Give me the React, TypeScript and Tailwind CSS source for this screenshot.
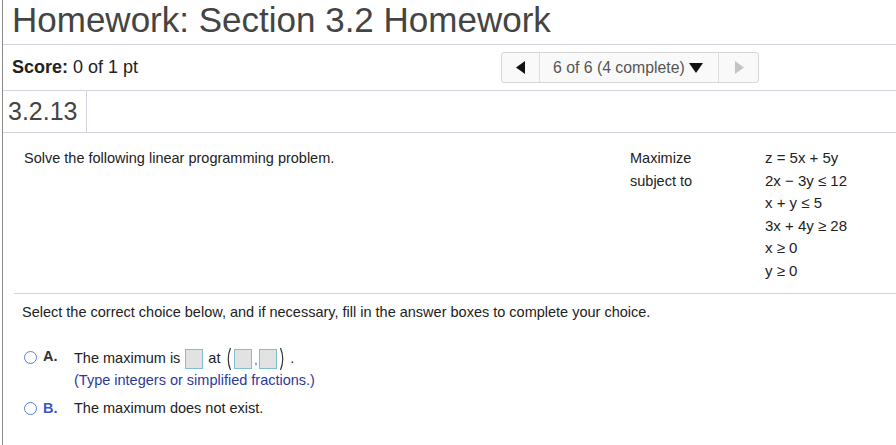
import React from 'react';

const AnswerBox = () => (
  <span className="inline-block w-[18px] h-[20px] bg-[#e2e2e2] border border-[#7fbfd0] align-middle" />
);

const Radio = () => (
  <span className="inline-block w-[13px] h-[13px] rounded-full border-[1.5px] border-[#5b7fe0] bg-white" />
);

const Paren = ({ right }: { right?: boolean }) => (
  <svg width="7" height="24" viewBox="0 0 7 24" className={right ? 'ml-[2px]' : 'mr-[2px]'}>
    <path d={right ? 'M1.5 1 Q6 12 1.5 23' : 'M5.5 1 Q1 12 5.5 23'} stroke="#333" strokeWidth="1.2" fill="none" />
  </svg>
);

const constraints = ['z = 5x + 5y', '2x − 3y ≤ 12', 'x + y ≤ 5', '3x + 4y ≥ 28', 'x ≥ 0', 'y ≥ 0'];

const App = () => {
  return (
    <div className="w-[896px] h-[445px] bg-white overflow-hidden pl-[2px]" style={{ fontFamily: '"Liberation Sans", Arial, sans-serif' }}>
      <div className="h-full border-l border-[#8a8a8a]">
        <div className="h-[45px] border-b border-[#d0d3de] pl-[9px]">
          <h1 className="text-[35px] leading-[39px] text-[#444]">Homework: Section 3.2 Homework</h1>
        </div>

        <div className="h-[46px] border-b border-[#d0d3de] flex items-center pl-[9px]">
          <p className="text-[18px] text-[#222] w-[489px]">
            <span className="font-bold">Score:</span> 0 of 1 pt
          </p>
          <div className="flex h-[31px] border border-[#d6d6d6] rounded-[3px] bg-[#f9f9f9] text-[15.8px] text-[#555]">
            <div className="w-[38px] flex items-center justify-center border-r border-[#ddd]">
              <svg width="10" height="13" viewBox="0 0 10 13"><path d="M9 0 L0 6.5 L9 13 Z" fill="#111" /></svg>
            </div>
            <div className="w-[179px] flex items-center pl-[13px] gap-[4px] border-r border-[#ddd]">
              <span>6 of 6 (4 complete)</span>
              <svg width="14" height="10" viewBox="0 0 14 10"><path d="M0 0 L14 0 L7 10 Z" fill="#111" /></svg>
            </div>
            <div className="w-[39px] flex items-center justify-center">
              <svg width="10" height="13" viewBox="0 0 10 13"><path d="M1 0 L10 6.5 L1 13 Z" fill="#c4c4c4" /></svg>
            </div>
          </div>
        </div>

        <div className="h-[42px] border-b border-[#d0d3de] flex">
          <div className="w-[84px] border-r border-[#d0d3de] flex items-center pl-[5px] text-[25px] text-[#444]">3.2.13</div>
        </div>

        <div className="h-[160px] flex text-[14.5px] text-[#222] pt-[14px] leading-[22.5px]">
          <div className="w-[627px] pl-[21px]">Solve the following linear programming problem.</div>
          <div className="w-[135px]">
            <div>Maximize</div>
            <div>subject to</div>
          </div>
          <div className="text-[15px]">
            {constraints.map((c) => (
              <div key={c}>{c}</div>
            ))}
          </div>
        </div>

        <div className="ml-[11px] border-t border-[#d0d3de] text-[14.5px] text-[#222] pt-[8px]">
          <p className="pl-[8px]">Select the correct choice below, and if necessary, fill in the answer boxes to complete your choice.</p>
          <div className="mt-[24px] pl-[10px] flex">
            <div className="flex items-start gap-[6px] w-[50px] pt-[3px]">
              <Radio />
              <span className="font-bold text-[#333] leading-[14px] -mt-[2px]">A.</span>
            </div>
            <div>
              <div className="flex items-center h-[22px] gap-[5px]">
                <span>The maximum is</span>
                <AnswerBox />
                <span>at</span>
                <span className="flex items-center">
                  <Paren />
                  <AnswerBox />
                  <span className="text-[10px] mx-[2px] self-end mb-[3px]">,</span>
                  <AnswerBox />
                  <Paren right />
                  <span className="ml-[4px]">.</span>
                </span>
              </div>
              <div className="text-[#2c3a9c] leading-[20px]">(Type integers or simplified fractions.)</div>
            </div>
          </div>
          <div className="mt-[8px] pl-[10px] flex items-center">
            <div className="flex items-center gap-[6px] w-[50px]">
              <Radio />
              <span className="font-bold text-[#3a55c8]">B.</span>
            </div>
            <span>The maximum does not exist.</span>
          </div>
        </div>
      </div>
    </div>
  );
};

export default App;
